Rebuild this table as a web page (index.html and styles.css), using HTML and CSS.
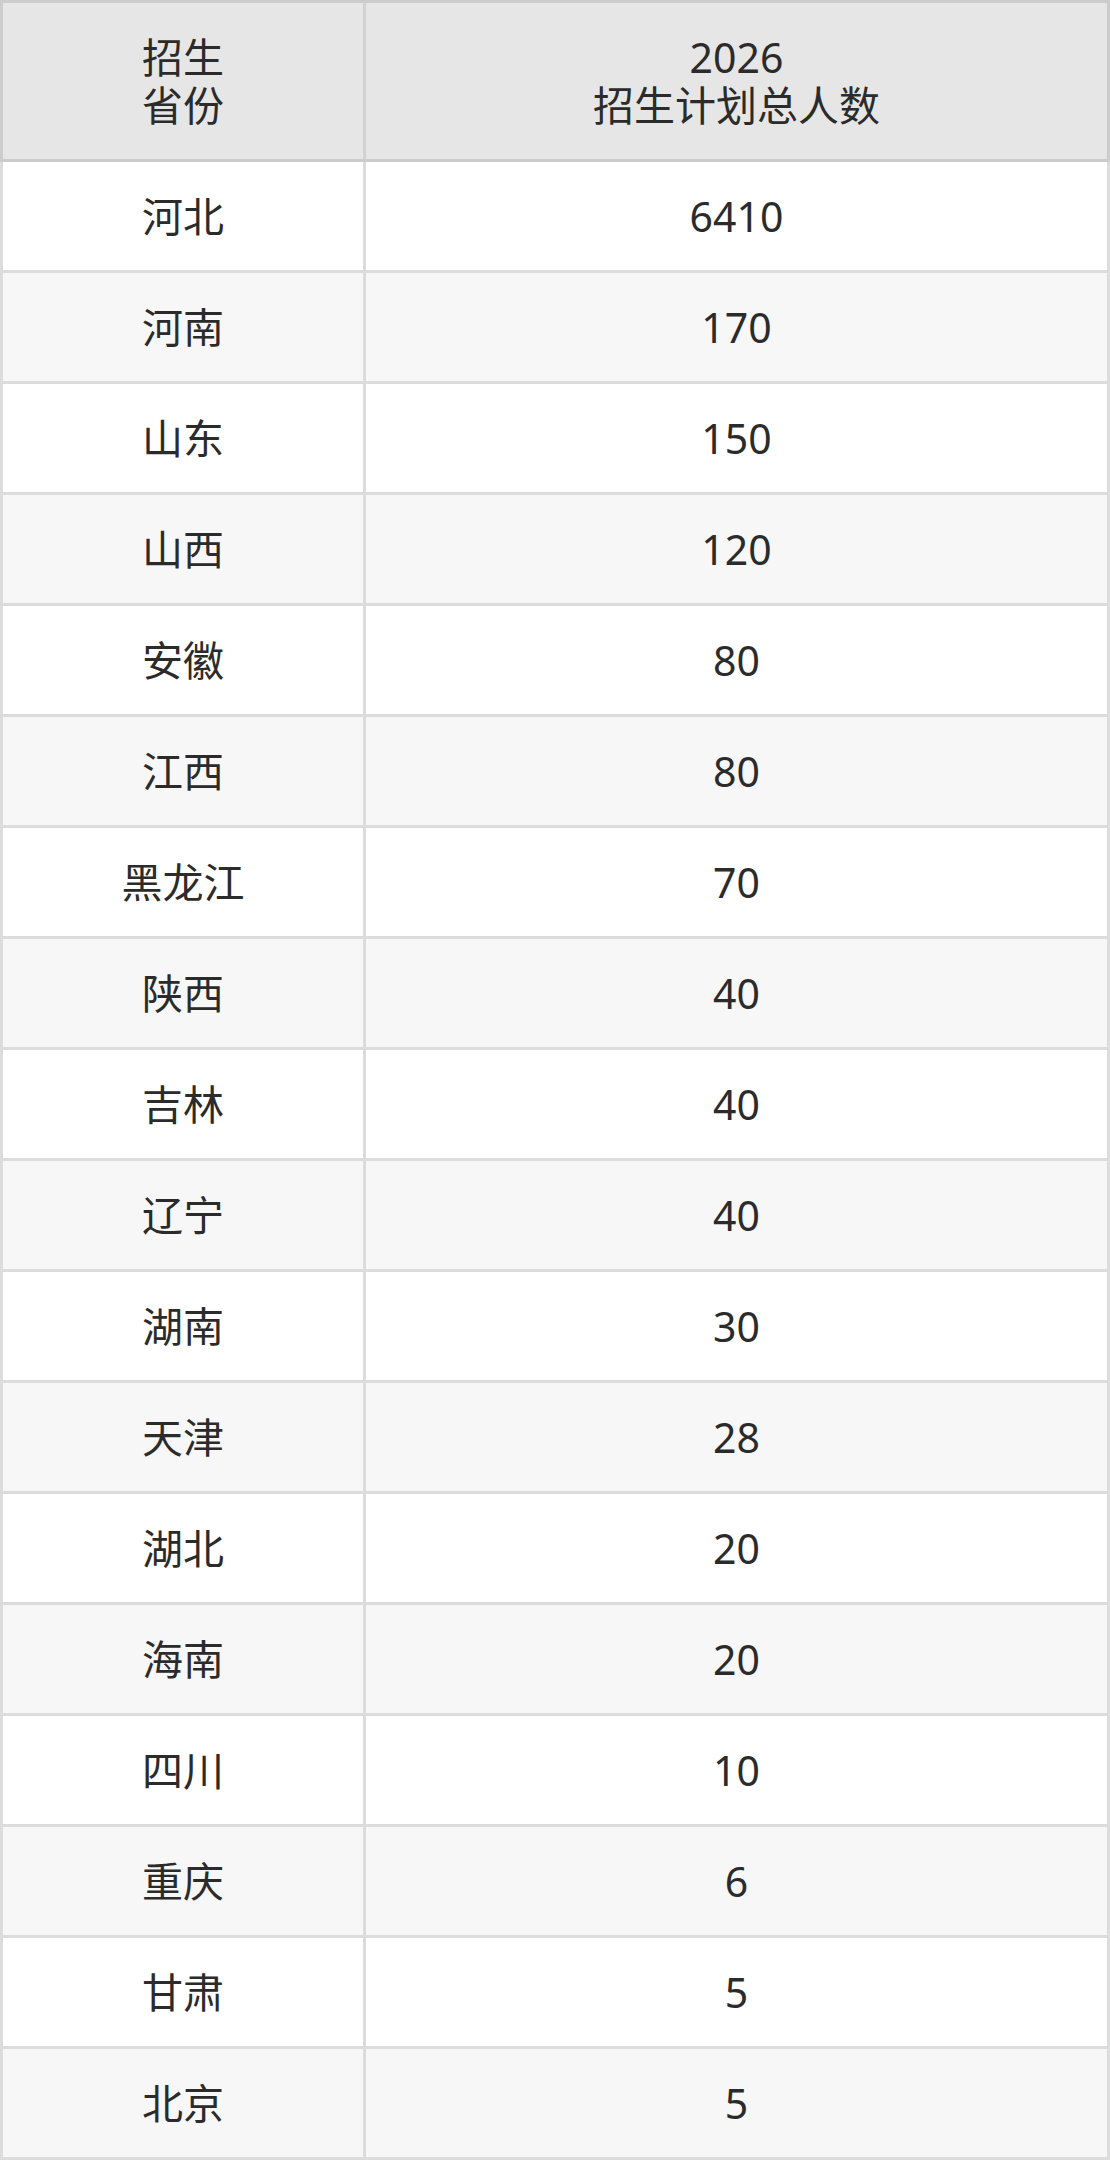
FILE: index.html
```html
<!DOCTYPE html>
<html lang="zh-CN">
<head>
<meta charset="utf-8">
<title>招生计划</title>
<link rel="stylesheet" href="styles.css">
</head>
<body>
<div class="table">
  <div class="row head">
    <div class="cell">招生<br>省份</div>
    <div class="cell">2026<br>招生计划总人数</div>
  </div>
  <div class="row"><div class="cell">河北</div><div class="cell">6410</div></div>
  <div class="row alt"><div class="cell">河南</div><div class="cell">170</div></div>
  <div class="row"><div class="cell">山东</div><div class="cell">150</div></div>
  <div class="row alt"><div class="cell">山西</div><div class="cell">120</div></div>
  <div class="row"><div class="cell">安徽</div><div class="cell">80</div></div>
  <div class="row alt"><div class="cell">江西</div><div class="cell">80</div></div>
  <div class="row"><div class="cell">黑龙江</div><div class="cell">70</div></div>
  <div class="row alt"><div class="cell">陕西</div><div class="cell">40</div></div>
  <div class="row"><div class="cell">吉林</div><div class="cell">40</div></div>
  <div class="row alt"><div class="cell">辽宁</div><div class="cell">40</div></div>
  <div class="row"><div class="cell">湖南</div><div class="cell">30</div></div>
  <div class="row alt"><div class="cell">天津</div><div class="cell">28</div></div>
  <div class="row"><div class="cell">湖北</div><div class="cell">20</div></div>
  <div class="row alt"><div class="cell">海南</div><div class="cell">20</div></div>
  <div class="row"><div class="cell">四川</div><div class="cell">10</div></div>
  <div class="row alt"><div class="cell">重庆</div><div class="cell">6</div></div>
  <div class="row"><div class="cell">甘肃</div><div class="cell">5</div></div>
  <div class="row alt"><div class="cell">北京</div><div class="cell">5</div></div>
</div>
</body>
</html>
```
FILE: styles.css
```css
html, body {
  margin: 0;
  padding: 0;
  background: #ffffff;
}
body {
  font-family: "Noto Sans", "Noto Sans CJK SC", sans-serif;
  font-size: 41px;
  color: #2b2b2b;
}
.table {
  width: 1110px;
  display: flex;
  flex-direction: column;
}
.row {
  display: grid;
  grid-template-columns: 360px 741px;
  column-gap: 3px;
  height: 111px;
  box-sizing: border-box;
  background: #dcdcdc;
  border-left: 3px solid #dcdcdc;
  border-right: 3px solid #dcdcdc;
  border-bottom: 3px solid #dcdcdc;
}
.cell {
  background: #ffffff;
  display: flex;
  align-items: center;
  justify-content: center;
  text-align: center;
  line-height: 48px;
}
.row.alt .cell {
  background: #f7f7f7;
}
.row.head {
  height: 162px;
  background: #d2d2d2;
  border: 3px solid #cccccc;
  border-top-color: #cccccc;
}
.row.head .cell {
  background: #e6e6e6;
}
```
